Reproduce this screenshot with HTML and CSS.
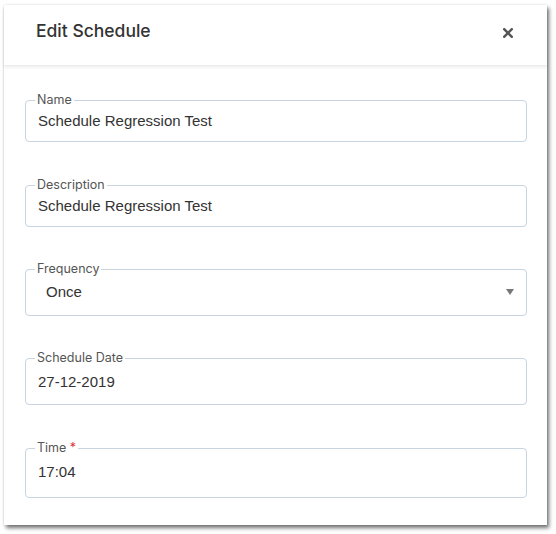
FILE: index.html
```html
<!DOCTYPE html>
<html lang="en">
<head>
<meta charset="utf-8">
<title>Edit Schedule</title>
<link rel="stylesheet" href="styles.css">
</head>
<body>
<div class="page">
<div class="modal">
  <div class="modal-header">
    <h2 class="modal-title">Edit Schedule</h2>
    <svg class="close" width="10" height="10" viewBox="0 0 10 10" aria-label="Close">
      <path d="M1.2 1.2 L8.8 8.8 M8.8 1.2 L1.2 8.8" stroke="#555" stroke-width="2.4" stroke-linecap="square" fill="none"/>
    </svg>
  </div>
  <div class="modal-body">
    <fieldset class="field field-text">
      <legend>Name</legend>
      <div class="value">Schedule Regression Test</div>
    </fieldset>
    <fieldset class="field field-text field-tight">
      <legend>Description</legend>
      <div class="value">Schedule Regression Test</div>
    </fieldset>
    <fieldset class="field field-select">
      <legend>Frequency</legend>
      <div class="value select-value"><span class="select-text">Once</span><span class="caret"></span></div>
    </fieldset>
    <fieldset class="field field-date">
      <legend>Schedule Date</legend>
      <div class="value">27-12-2019</div>
    </fieldset>
    <fieldset class="field field-time">
      <legend>Time <span class="req">*</span></legend>
      <div class="value">17:04</div>
    </fieldset>
  </div>
</div>
</div>
</body>
</html>
```

FILE: styles.css
```css
* { box-sizing: border-box; }

html, body {
  margin: 0;
  padding: 0;
  background: #ffffff;
}

body {
  font-family: Inter, "Noto Sans", sans-serif;
  color: #333;
}

.page {
  padding: 5px 0 10px 4px;
}

.modal {
  width: 543px;
  background: #fff;
  box-shadow: 2px 3px 4px rgba(0, 0, 0, 0.55), 0 0 2px rgba(0, 0, 0, 0.12);
}

.modal-header {
  position: relative;
  z-index: 1;
  height: 61px;
  display: flex;
  justify-content: space-between;
  align-items: flex-start;
  padding: 15px 34px 0 32px;
  border-bottom: 1px solid #ececec;
  box-shadow: 0 2px 3px rgba(0, 0, 0, 0.06);
}

.modal-title {
  margin: 0;
  font-size: 17.5px;
  line-height: 22px;
  font-weight: 500;
  color: #333;
}

.close {
  display: block;
  margin-top: 8px;
}

.modal-body {
  padding: 27px 20px 27px 21px;
}

.field {
  margin: 0 0 36px;
  padding: 5px 12px 12px;
  border: 1px solid #c8d5e0;
  border-radius: 4px;
  min-width: 0;
}

.field:last-child {
  margin-bottom: 0;
}

.field-tight {
  margin-bottom: 35px;
}

.field legend {
  margin-left: -3px;
  padding: 0 2px;
  font-family: Inter, "Noto Sans", sans-serif;
  font-size: 12.5px;
  line-height: 14px;
  color: #555;
}

.req {
  color: #e0323c;
}

.value {
  font-family: "Liberation Sans", Arial, sans-serif;
  font-size: 15px;
  line-height: 17px;
  color: #333;
}

.field-select {
  margin-bottom: 35px;
  padding: 7px 12px 15px;
}

.select-text {
  padding-left: 8px;
}

.field-date {
  padding: 8px 12px 14px;
}

.field-time {
  padding: 8px 12px 17px;
}

.select-value {
  display: flex;
  justify-content: space-between;
  align-items: center;
}

.caret {
  width: 0;
  height: 0;
  border-left: 4px solid transparent;
  border-right: 4px solid transparent;
  border-top: 6px solid #777;
}
```
